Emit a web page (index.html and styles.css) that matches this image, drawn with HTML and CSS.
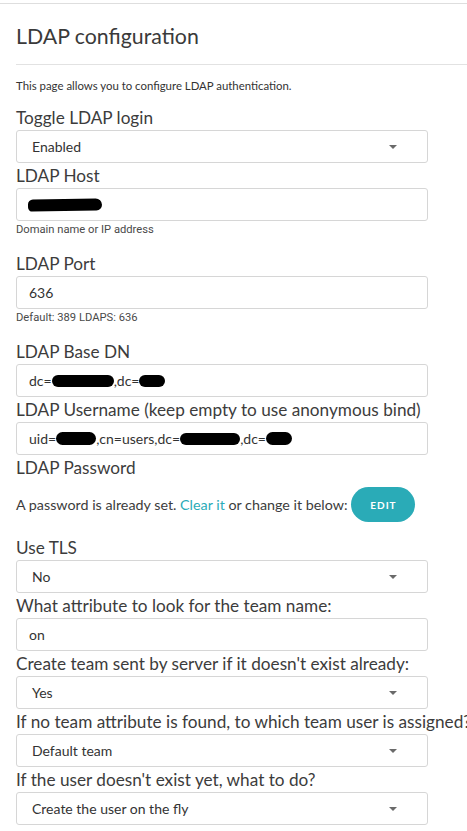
FILE: index.html
```html
<!DOCTYPE html>
<html lang="en">
<head>
<meta charset="utf-8">
<title>LDAP configuration</title>
<link rel="stylesheet" href="styles.css">
</head>
<body>
<div class="page">
  <h1 class="title">LDAP configuration</h1>
  <hr class="rule">
  <p class="intro">This page allows you to configure LDAP authentication.</p>

  <div class="field">
    <label class="label">Toggle LDAP login</label>
    <div class="select"><span>Enabled</span><span class="caret"></span></div>
  </div>

  <div class="field">
    <label class="label">LDAP Host</label>
    <div class="input"><span class="blob b-host"></span></div>
    <div class="help">Domain name or IP address</div>
  </div>

  <div class="field">
    <label class="label">LDAP Port</label>
    <div class="input">636</div>
    <div class="help">Default: 389 LDAPS: 636</div>
  </div>

  <div class="field">
    <label class="label">LDAP Base DN</label>
    <div class="input">dc=<span class="blob b-dn1"></span>,dc=<span class="blob b-dn2"></span></div>
  </div>

  <div class="field">
    <label class="label">LDAP Username (keep empty to use anonymous bind)</label>
    <div class="input">uid=<span class="blob b-u1"></span>,cn=users,dc=<span class="blob b-u2"></span>,dc=<span class="blob b-u3"></span></div>
  </div>

  <div class="field">
    <label class="label">LDAP Password</label>
    <div class="pwrow">
      <span>A password is already set. <a class="link" href="#">Clear it</a> or change it below:</span>
      <button class="btn" type="button">EDIT</button>
    </div>
  </div>

  <div class="field">
    <label class="label">Use TLS</label>
    <div class="select"><span>No</span><span class="caret"></span></div>
  </div>

  <div class="field">
    <label class="label">What attribute to look for the team name:</label>
    <div class="input">on</div>
  </div>

  <div class="field">
    <label class="label">Create team sent by server if it doesn't exist already:</label>
    <div class="select"><span>Yes</span><span class="caret"></span></div>
  </div>

  <div class="field">
    <label class="label nowrap">If no team attribute is found, to which team user is assigned?</label>
    <div class="select"><span>Default team</span><span class="caret"></span></div>
  </div>

  <div class="field">
    <label class="label">If the user doesn't exist yet, what to do?</label>
    <div class="select"><span>Create the user on the fly</span><span class="caret"></span></div>
  </div>
</div>
</body>
</html>
```

FILE: styles.css
```css
html, body {
  margin: 0;
  padding: 0;
  background: #fff;
  overflow: hidden;
}
body {
  font-family: Lato, "Open Sans", sans-serif;
  color: #3c3c3c;
}
.page {
  border-top: 1px solid #dedede;
  margin-top: 3px;
  padding-left: 16px;
}
.title {
  margin: 0;
  padding-top: 18px;
  font-size: 21.3px;
  line-height: 28px;
  font-weight: 400;
  color: #3a3a3a;
}
.rule {
  border: 0;
  border-top: 1px solid #e2e2e2;
  margin: 14px 0 0 0;
}
.intro {
  margin: 14px 0 0 0;
  font-size: 11.4px;
  line-height: 14px;
  color: #333;
}
.field {
  width: 412px;
}
.intro + .field {
  margin-top: 12px;
}
.label {
  display: block;
  font-size: 17.2px;
  line-height: 25px;
  color: #3c3c3c;
}
.nowrap {
  white-space: nowrap;
}
.select, .input {
  box-sizing: border-box;
  height: 33px;
  border: 1px solid #d6d6d6;
  border-radius: 3px;
  display: flex;
  align-items: center;
  font-size: 14px;
  color: #333;
  background: #fff;
  white-space: nowrap;
}
.select {
  padding: 0 30px 0 15px;
  justify-content: space-between;
}
.input {
  padding: 0 12px;
}
.caret {
  width: 0;
  height: 0;
  border-left: 4.5px solid transparent;
  border-right: 4.5px solid transparent;
  border-top: 4.5px solid #6a6a6a;
  margin-top: 1px;
}
.help {
  font-family: Roboto, "Liberation Sans", sans-serif;
  font-size: 11.2px;
  line-height: 14px;
  color: #4a4a4a;
  margin-top: 2px;
  margin-bottom: 14px;
}
.blob {
  display: inline-block;
  background: #000;
  border-radius: 8px;
  height: 11px;
  vertical-align: middle;
}
.b-host { width: 74px; height: 12px; border-radius: 7px 9px 8px 6px; transform: rotate(-1deg); margin-left: -1px; }
.b-dn1 { width: 62px; height: 12px; }
.b-dn2 { width: 26px; height: 12px; }
.b-u1 { width: 40px; height: 13px; }
.b-u2 { width: 60px; height: 12px; }
.b-u3 { width: 26px; height: 13px; }
.pwrow {
  display: flex;
  align-items: center;
  height: 35px;
  margin: 7px 0 13px 0;
  font-size: 14.3px;
  color: #3c3c3c;
  white-space: nowrap;
}
.link {
  color: #2aabb8;
  text-decoration: none;
}
.btn {
  margin-left: 4px;
  flex: none;
  width: 64px;
  height: 35px;
  border: 0;
  border-radius: 18px;
  background: #2aabb7;
  color: #fff;
  font-family: Lato, sans-serif;
  font-size: 10px;
  font-weight: 700;
  letter-spacing: 1px;
  padding: 0;
}
```
